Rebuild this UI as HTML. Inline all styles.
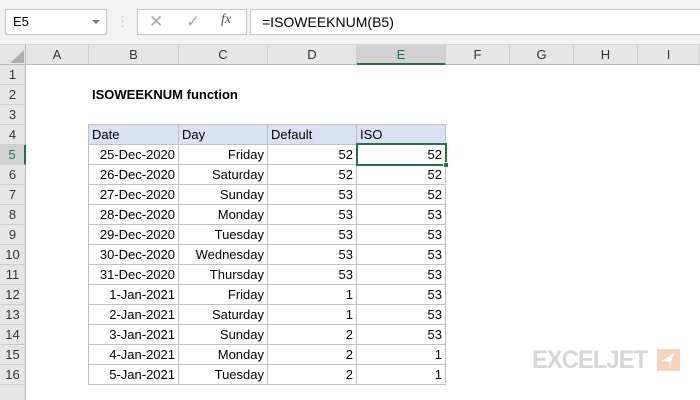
<!DOCTYPE html><html><head><style>
*{margin:0;padding:0;box-sizing:border-box}
body{width:700px;height:400px;overflow:hidden;background:#fff;font-family:"Liberation Sans",sans-serif;position:relative}
.a{position:absolute}
.tb{left:0;top:0;width:700px;height:45px;background:#f3f3f3;border-bottom:1px solid #d4d4d4}
.box{background:#fff;border:1px solid #c6c6c6}
.ch{top:45px;height:20px;background:#e6e6e6;border-right:1px solid #cfcfcf;border-bottom:1px solid #b8b8b8;font-size:13px;color:#333;text-align:center;line-height:20px}
.rh{left:0;width:26px;height:20px;background:#e6e6e6;border-bottom:1px solid #cfcfcf;border-right:1px solid #b8b8b8;font-size:13px;color:#333;text-align:center;line-height:20px}
.c{height:20px;border-right:1px solid #c0c0c0;border-bottom:1px solid #c0c0c0;font-size:13px;line-height:19px;padding:0 3px;color:#000;white-space:nowrap}
.r{text-align:right}
.h{background:#d9e1f2}
</style></head><body>
<div class="a tb"></div>
<div class="a box" style="left:5px;top:9px;width:102px;height:26px;font-size:13px;line-height:24px;padding-left:7px">E5</div>
<div class="a" style="left:92px;top:20px;border-left:4px solid transparent;border-right:4px solid transparent;border-top:4px solid #777"></div>
<div class="a" style="left:121px;top:14px;color:#aaa;font-size:10px;line-height:5px">·<br>·<br>·</div>
<div class="a box" style="left:137px;top:9px;width:110px;height:26px"></div>
<div class="a" style="left:149px;top:12px;color:#aaa;font-size:17px">✕</div>
<div class="a" style="left:186px;top:12px;color:#aaa;font-size:17px">✓</div>
<div class="a" style="left:221px;top:12px;color:#555;font-size:14px;font-style:italic;font-family:'Liberation Serif',serif">fx</div>
<div class="a box" style="left:250px;top:9px;width:460px;height:26px;font-size:14px;line-height:24px;padding-left:11px">=ISOWEEKNUM(B5)</div>
<div class="a" style="left:0;top:45px;width:26px;height:20px;background:#e6e6e6;border-right:1px solid #b8b8b8;border-bottom:1px solid #b8b8b8"></div>
<div class="a" style="left:10px;top:50px;border-left:14px solid transparent;border-bottom:13px solid #b0b0b0"></div>
<div class="a ch" style="left:26px;width:63px">A</div>
<div class="a ch" style="left:89px;width:90px">B</div>
<div class="a ch" style="left:179px;width:89px">C</div>
<div class="a ch" style="left:268px;width:89px">D</div>
<div class="a ch" style="left:357px;width:89px;background:#d2d2d2;color:#217346;border-bottom:2px solid #217346">E</div>
<div class="a ch" style="left:446px;width:64px">F</div>
<div class="a ch" style="left:510px;width:64px">G</div>
<div class="a ch" style="left:574px;width:64px">H</div>
<div class="a ch" style="left:638px;width:62px">I</div>
<div class="a rh" style="top:65px">1</div><div class="a rh" style="top:85px">2</div><div class="a rh" style="top:105px">3</div><div class="a rh" style="top:125px">4</div>
<div class="a rh" style="top:145px;background:#d2d2d2;color:#217346;border-right:2px solid #217346">5</div>
<div class="a rh" style="top:165px">6</div><div class="a rh" style="top:185px">7</div><div class="a rh" style="top:205px">8</div><div class="a rh" style="top:225px">9</div><div class="a rh" style="top:245px">10</div><div class="a rh" style="top:265px">11</div><div class="a rh" style="top:285px">12</div><div class="a rh" style="top:305px">13</div><div class="a rh" style="top:325px">14</div><div class="a rh" style="top:345px">15</div><div class="a rh" style="top:365px">16</div>
<div class="a" style="left:0;top:385px;width:26px;height:15px;background:#e6e6e6;border-right:1px solid #b8b8b8"></div>
<div class="a" style="left:92px;top:87px;font-size:13px;font-weight:bold">ISOWEEKNUM function</div>
<div class="a" style="left:88px;top:124px;width:359px;border-top:1px solid #c0c0c0;border-left:1px solid #c0c0c0">
<div style="display:grid;grid-template-columns:90px 89px 89px 89px">
<div class="c h">Date</div><div class="c h">Day</div><div class="c h">Default</div><div class="c h">ISO</div>
<div class="c r">25-Dec-2020</div><div class="c r">Friday</div><div class="c r">52</div><div class="c r">52</div>
<div class="c r">26-Dec-2020</div><div class="c r">Saturday</div><div class="c r">52</div><div class="c r">52</div>
<div class="c r">27-Dec-2020</div><div class="c r">Sunday</div><div class="c r">53</div><div class="c r">52</div>
<div class="c r">28-Dec-2020</div><div class="c r">Monday</div><div class="c r">53</div><div class="c r">53</div>
<div class="c r">29-Dec-2020</div><div class="c r">Tuesday</div><div class="c r">53</div><div class="c r">53</div>
<div class="c r">30-Dec-2020</div><div class="c r">Wednesday</div><div class="c r">53</div><div class="c r">53</div>
<div class="c r">31-Dec-2020</div><div class="c r">Thursday</div><div class="c r">53</div><div class="c r">53</div>
<div class="c r">1-Jan-2021</div><div class="c r">Friday</div><div class="c r">1</div><div class="c r">53</div>
<div class="c r">2-Jan-2021</div><div class="c r">Saturday</div><div class="c r">1</div><div class="c r">53</div>
<div class="c r">3-Jan-2021</div><div class="c r">Sunday</div><div class="c r">2</div><div class="c r">53</div>
<div class="c r">4-Jan-2021</div><div class="c r">Monday</div><div class="c r">2</div><div class="c r">1</div>
<div class="c r">5-Jan-2021</div><div class="c r">Tuesday</div><div class="c r">2</div><div class="c r">1</div>
</div></div>
<div class="a" style="left:356px;top:143px;width:91px;height:23px;border:2px solid #217346"></div>
<div class="a" style="left:443px;top:162px;width:6px;height:6px;background:#217346;border:1px solid #fff"></div>
<div class="a" style="left:532px;top:346px;font-size:25px;font-weight:bold;color:#d6d6d6;letter-spacing:-1px;transform:scaleX(.95);transform-origin:left">EXCELJET</div>
<svg class="a" style="left:657px;top:349px" width="23" height="22"><rect width="23" height="22" fill="#f6d3bb"/><polygon points="17,4 5,12 13,13 12,19" fill="#fff"/></svg>
</body></html>
